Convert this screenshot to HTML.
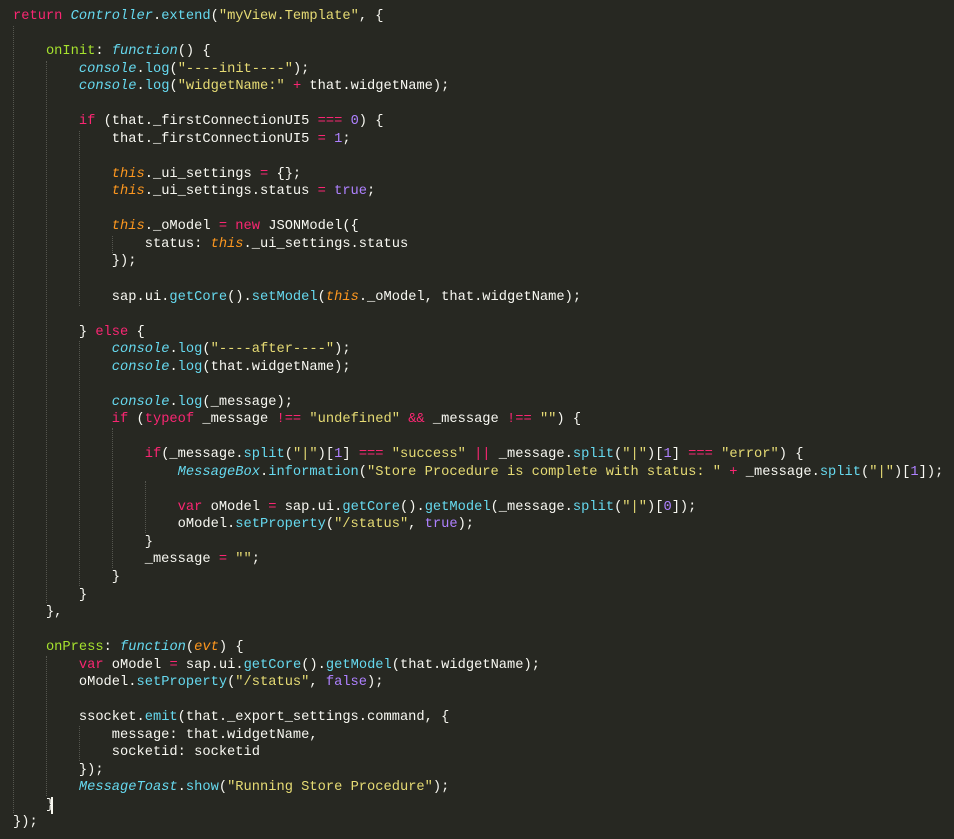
<!DOCTYPE html>
<html><head><meta charset="utf-8"><style>
html,body{margin:0;padding:0;background:#272822;width:954px;height:839px;overflow:hidden}
pre{margin:0;position:absolute;left:13px;top:8px;font-family:"Liberation Mono",monospace;font-size:13.73px;line-height:17.53px;color:#f8f8f2;white-space:pre}
.k{color:#f92672}.i{color:#66d9ef;font-style:italic}.f{color:#66d9ef}.g{color:#a6e22e}.o{color:#fd971f;font-style:italic}.n{color:#ae81ff}.s{color:#e6db74}
.gd{position:absolute;width:0;border-left:1px dotted #55564f}
.cur{position:absolute;left:51px;top:797px;width:2px;height:17px;background:#f8f8f0}
</style></head><body>
<div class="gd" style="left:13px;top:26px;height:787px"></div>
<div class="gd" style="left:46px;top:61px;height:542px"></div>
<div class="gd" style="left:46px;top:656px;height:140px"></div>
<div class="gd" style="left:79px;top:131px;height:175px"></div>
<div class="gd" style="left:79px;top:341px;height:245px"></div>
<div class="gd" style="left:79px;top:726px;height:35px"></div>
<div class="gd" style="left:112px;top:236px;height:17px"></div>
<div class="gd" style="left:112px;top:428px;height:140px"></div>
<div class="gd" style="left:145px;top:481px;height:52px"></div>
<div class="cur"></div>
<pre><span class="k">return</span> <span class="i">Controller</span>.<span class="f">extend</span>(<span class="s">"myView.Template"</span>, {

    <span class="g">onInit</span>: <span class="i">function</span>() {
        <span class="i">console</span>.<span class="f">log</span>(<span class="s">"----init----"</span>);
        <span class="i">console</span>.<span class="f">log</span>(<span class="s">"widgetName:"</span> <span class="k">+</span> that.widgetName);

        <span class="k">if</span> (that._firstConnectionUI5 <span class="k">===</span> <span class="n">0</span>) {
            that._firstConnectionUI5 <span class="k">=</span> <span class="n">1</span>;

            <span class="o">this</span>._ui_settings <span class="k">=</span> {};
            <span class="o">this</span>._ui_settings.status <span class="k">=</span> <span class="n">true</span>;

            <span class="o">this</span>._oModel <span class="k">=</span> <span class="k">new</span> JSONModel({
                status: <span class="o">this</span>._ui_settings.status
            });

            sap.ui.<span class="f">getCore</span>().<span class="f">setModel</span>(<span class="o">this</span>._oModel, that.widgetName);

        } <span class="k">else</span> {
            <span class="i">console</span>.<span class="f">log</span>(<span class="s">"----after----"</span>);
            <span class="i">console</span>.<span class="f">log</span>(that.widgetName);

            <span class="i">console</span>.<span class="f">log</span>(_message);
            <span class="k">if</span> (<span class="k">typeof</span> _message <span class="k">!==</span> <span class="s">"undefined"</span> <span class="k">&amp;&amp;</span> _message <span class="k">!==</span> <span class="s">""</span>) {

                <span class="k">if</span>(_message.<span class="f">split</span>(<span class="s">"|"</span>)[<span class="n">1</span>] <span class="k">===</span> <span class="s">"success"</span> <span class="k">||</span> _message.<span class="f">split</span>(<span class="s">"|"</span>)[<span class="n">1</span>] <span class="k">===</span> <span class="s">"error"</span>) {
                    <span class="i">MessageBox</span>.<span class="f">information</span>(<span class="s">"Store Procedure is complete with status: "</span> <span class="k">+</span> _message.<span class="f">split</span>(<span class="s">"|"</span>)[<span class="n">1</span>]);

                    <span class="k">var</span> oModel <span class="k">=</span> sap.ui.<span class="f">getCore</span>().<span class="f">getModel</span>(_message.<span class="f">split</span>(<span class="s">"|"</span>)[<span class="n">0</span>]);
                    oModel.<span class="f">setProperty</span>(<span class="s">"/status"</span>, <span class="n">true</span>);
                }
                _message <span class="k">=</span> <span class="s">""</span>;
            }
        }
    },

    <span class="g">onPress</span>: <span class="i">function</span>(<span class="o">evt</span>) {
        <span class="k">var</span> oModel <span class="k">=</span> sap.ui.<span class="f">getCore</span>().<span class="f">getModel</span>(that.widgetName);
        oModel.<span class="f">setProperty</span>(<span class="s">"/status"</span>, <span class="n">false</span>);

        ssocket.<span class="f">emit</span>(that._export_settings.command, {
            message: that.widgetName,
            socketid: socketid
        });
        <span class="i">MessageToast</span>.<span class="f">show</span>(<span class="s">"Running Store Procedure"</span>);
    }
});</pre>
</body></html>
